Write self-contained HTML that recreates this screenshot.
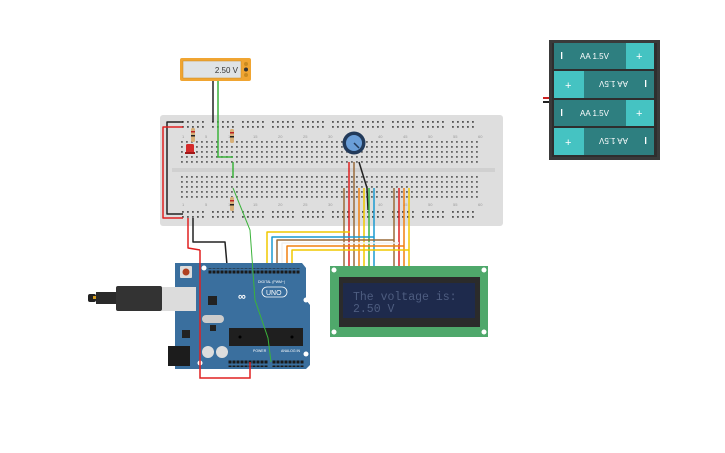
<!DOCTYPE html>
<html><head><meta charset="utf-8"><style>
html,body{margin:0;padding:0;background:#fff;width:725px;height:453px;overflow:hidden}
svg{display:block}
text{font-family:"Liberation Sans",sans-serif}
text.mono{font-family:"Liberation Mono",monospace}
</style></head><body>
<svg width="725" height="453" viewBox="0 0 725 453" xmlns="http://www.w3.org/2000/svg">
<defs>
<pattern id="h" x="181" y="141" width="5" height="5" patternUnits="userSpaceOnUse"><rect x="0" y="0" width="1.8" height="1.8" fill="#666"/></pattern>
<pattern id="r" x="182" y="121" width="30" height="5" patternUnits="userSpaceOnUse">
<rect x="0" y="0" width="1.8" height="1.8" fill="#555"/><rect x="5" y="0" width="1.8" height="1.8" fill="#555"/><rect x="10" y="0" width="1.8" height="1.8" fill="#555"/><rect x="15" y="0" width="1.8" height="1.8" fill="#555"/><rect x="20" y="0" width="1.8" height="1.8" fill="#555"/></pattern>
<pattern id="p" x="0" y="0" width="4" height="5" patternUnits="userSpaceOnUse"><rect x="0.5" y="0.5" width="3" height="3" fill="#1a1a1a"/></pattern>
</defs>

<rect x="549" y="40" width="111" height="120" fill="#3a3a3a"/>
<rect x="552" y="43" width="105" height="114" fill="#2e2e2e"/>
<g font-size="8" fill="#fff">
<rect x="554" y="43" width="100" height="26" fill="#2e7f80"/><rect x="626" y="43" width="28" height="26" fill="#45c3c2"/>
<text x="580" y="59">AA 1.5V</text><text x="636" y="60" font-size="11">+</text><rect x="561" y="52" width="1.3" height="7" fill="#fff"/>
<rect x="554" y="71" width="100" height="27" fill="#2e7f80"/><rect x="554" y="71" width="30" height="27" fill="#45c3c2"/>
<g transform="rotate(180 610 84)"><text x="592" y="87">AA 1.5V</text></g><text x="565" y="89" font-size="11">+</text><rect x="645" y="80" width="1.3" height="7" fill="#fff"/>
<rect x="554" y="100" width="100" height="26" fill="#2e7f80"/><rect x="626" y="100" width="28" height="26" fill="#45c3c2"/>
<text x="580" y="116">AA 1.5V</text><text x="636" y="117" font-size="11">+</text><rect x="561" y="109" width="1.3" height="7" fill="#fff"/>
<rect x="554" y="128" width="100" height="27" fill="#2e7f80"/><rect x="554" y="128" width="30" height="27" fill="#45c3c2"/>
<g transform="rotate(180 610 141)"><text x="592" y="144">AA 1.5V</text></g><text x="565" y="146" font-size="11">+</text><rect x="645" y="137" width="1.3" height="7" fill="#fff"/>
</g>
<rect x="543" y="97" width="6" height="2" fill="#c22"/><rect x="543" y="101" width="6" height="2" fill="#222"/>

<rect x="160" y="115" width="343" height="111" rx="3" fill="#dedede"/>
<rect x="182" y="121" width="300" height="7" fill="url(#r)"/>
<rect x="182" y="211" width="300" height="7" fill="url(#r)"/>
<rect x="181" y="141" width="300" height="25" fill="url(#h)"/>
<rect x="181" y="176" width="300" height="25" fill="url(#h)"/>
<line x1="172" y1="170" x2="495" y2="170" stroke="#d0d0d0" stroke-width="4"/>
<g font-size="4" fill="#999">
<text x="182" y="138">1</text><text x="205" y="138">5</text><text x="228" y="138">10</text><text x="253" y="138">15</text><text x="278" y="138">20</text><text x="303" y="138">25</text><text x="328" y="138">30</text><text x="378" y="138">40</text><text x="403" y="138">45</text><text x="428" y="138">50</text><text x="453" y="138">55</text><text x="478" y="138">60</text>
<text x="182" y="206">1</text><text x="205" y="206">5</text><text x="228" y="206">10</text><text x="253" y="206">15</text><text x="278" y="206">20</text><text x="303" y="206">25</text><text x="328" y="206">30</text><text x="378" y="206">40</text><text x="403" y="206">45</text><text x="428" y="206">50</text><text x="453" y="206">55</text><text x="478" y="206">60</text>
</g>

<rect x="180" y="58" width="71" height="23" rx="2" fill="#f0a532"/>
<rect x="183" y="61" width="58" height="17" fill="#dfe3e6" stroke="#c98a20" stroke-width="0.5"/>
<text x="238" y="73" font-size="8" text-anchor="end" fill="#333">2.50 V</text>
<circle cx="246" cy="64" r="2" fill="#c98a20"/><circle cx="246" cy="69.5" r="2" fill="#333"/><circle cx="246" cy="75" r="2" fill="#c98a20"/>

<g fill="none" stroke-width="1.5" stroke-linejoin="round">
<polyline points="213,81 213,122" stroke="#222"/>
<polyline points="218,81 218,157 233,157" stroke="#3bb33b"/>
<polyline points="233,162 233,178" stroke="#3bb33b"/>
<polyline points="183,122 167,122 167,214 183,214" stroke="#222"/>
<polyline points="183,127 163,127 163,218 183,218" stroke="#e02020"/>
<polyline points="188,218 188,248 200,250" stroke="#e02020"/>
<polyline points="193,218 193,242 225,242 227,265" stroke="#222"/>
<polyline points="349,162 349,270" stroke="#e02020"/>
<polyline points="354,162 354,270" stroke="#9a6b3a"/>
<polyline points="359,162 367,188 368,210" stroke="#222"/>
<polyline points="344,188 344,270" stroke="#9a6b3a"/>
<polyline points="359,188 359,270" stroke="#f08010"/>
<polyline points="364,188 364,270" stroke="#f0c800"/>
<polyline points="369,188 369,270" stroke="#3bb33b"/>
<polyline points="374,188 374,270" stroke="#1a9ad0"/>
<polyline points="394,188 394,270" stroke="#9a6b3a"/>
<polyline points="399,188 399,270" stroke="#e02020"/>
<polyline points="404,188 404,270" stroke="#f08010"/>
<polyline points="409,188 409,270" stroke="#f0c800"/>
<polyline points="350,232 267,232 267,270" stroke="#f0c800"/>
<polyline points="374,237 272,237 272,270" stroke="#1a9ad0"/>
<polyline points="394,240 277,240 277,270" stroke="#9a6b3a"/>
<polyline points="399,243 282,243 282,270" stroke="#f0f0f0"/>
<polyline points="404,246 287,246 287,270" stroke="#f08010"/>
<polyline points="409,250 292,250 292,270" stroke="#f0c800"/>
</g>

<g>
<rect x="191" y="128" width="4" height="14" rx="1.5" fill="#d8b078"/><rect x="191" y="131" width="4" height="1.5" fill="#b22"/><rect x="191" y="135" width="4" height="1.5" fill="#222"/>
<rect x="230" y="129" width="4" height="14" rx="1.5" fill="#d8b078"/><rect x="230" y="132" width="4" height="1.5" fill="#b22"/><rect x="230" y="136" width="4" height="1.5" fill="#222"/>
<rect x="230" y="197" width="4" height="14" rx="1.5" fill="#d8b078"/><rect x="230" y="200" width="4" height="1.5" fill="#b22"/><rect x="230" y="204" width="4" height="1.5" fill="#222"/>
<rect x="186" y="144" width="8" height="10" rx="1.5" fill="#d42a2a"/><rect x="185" y="152" width="10" height="2" fill="#a01818"/>
</g>
<circle cx="354" cy="143" r="11.5" fill="#223a5a"/><circle cx="354" cy="143" r="8" fill="#6a9ed8"/><line x1="354" y1="143" x2="359" y2="148" stroke="#223a5a" stroke-width="1.5"/>

<rect x="88" y="294" width="8" height="8" rx="2" fill="#222"/><rect x="93" y="296" width="3" height="3" fill="#d9a020"/>
<rect x="96" y="292" width="20" height="12" fill="#2a2a2a"/>
<rect x="116" y="286" width="46" height="25" rx="2" fill="#333"/>
<path d="M175 263 H302 L306 268 V300 L310 305 V365 L306 369 H175 Z" fill="#3a6f9e"/>
<rect x="162" y="287" width="34" height="24" fill="#dcdcdc"/>
<rect x="180" y="266" width="12" height="12" rx="1" fill="#ddd"/><circle cx="186" cy="272" r="3.5" fill="#b04020"/>
<rect x="168" y="346" width="22" height="20" fill="#1c1c1c"/>
<rect x="208" y="268" width="92" height="7" fill="url(#p)"/>
<rect x="228" y="360" width="40" height="7" fill="url(#p)"/>
<rect x="272" y="360" width="32" height="7" fill="url(#p)"/>
<rect x="229" y="328" width="74" height="18" fill="#1f1f1f"/><circle cx="240" cy="337" r="1.5" fill="#000"/><circle cx="292" cy="337" r="1.5" fill="#000"/>
<rect x="208" y="296" width="9" height="9" fill="#222"/>
<rect x="202" y="315" width="22" height="8" rx="4" fill="#ccc"/>
<rect x="210" y="325" width="6" height="6" fill="#222"/>
<rect x="182" y="330" width="8" height="8" fill="#222"/>
<circle cx="208" cy="352" r="6" fill="#ddd"/><circle cx="222" cy="352" r="6" fill="#ddd"/>
<circle cx="204" cy="268" r="2.5" fill="#fff"/><circle cx="306" cy="300" r="2.5" fill="#fff"/><circle cx="306" cy="354" r="2.5" fill="#fff"/><circle cx="200" cy="363" r="2.5" fill="#fff"/>
<text x="238" y="300" font-size="11" fill="#fff" font-weight="bold">∞</text>
<rect x="262" y="287" width="25" height="10" rx="5" fill="none" stroke="#fff" stroke-width="0.8"/><text x="266" y="295" font-size="7" fill="#fff">UNO</text>
<text x="258" y="283" font-size="3.5" fill="#fff">DIGITAL (PWM~)</text>
<text x="253" y="352" font-size="3.5" fill="#fff">POWER</text><text x="281" y="352" font-size="3.5" fill="#fff">ANALOG IN</text>
<polyline points="233,188 250,230 255,300 268,338 271,362" fill="none" stroke="#3bb33b" stroke-width="1"/>
<polyline points="200,250 200,378 250,378 250,362" fill="none" stroke="#e02020" stroke-width="1.5"/>

<rect x="330" y="266" width="158" height="71" fill="#4fa86b"/>
<circle cx="334" cy="270" r="2.5" fill="#fff"/><circle cx="484" cy="270" r="2.5" fill="#fff"/><circle cx="334" cy="332" r="2.5" fill="#fff"/><circle cx="484" cy="332" r="2.5" fill="#fff"/>
<rect x="339" y="277" width="141" height="50" fill="#2b2b2b"/>
<rect x="343" y="283" width="132" height="35" fill="#1e2a4c"/>
<text class="mono" x="353" y="300" font-size="11.5" fill="#4e5d80">The voltage is:</text>
<text class="mono" x="353" y="312" font-size="11.5" fill="#4e5d80">2.50 V</text>
</svg>
</body></html>
